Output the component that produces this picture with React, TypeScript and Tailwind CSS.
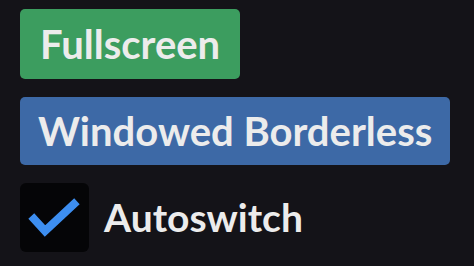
export default function App() {
  return (
    <div
      className="flex h-[266px] w-[474px] flex-col items-start gap-[18px] bg-[#141318] pl-[20px] pt-[9px] text-[#ececec]"
      style={{ fontFamily: 'Lato, sans-serif' }}
    >
      <button className="flex h-[70px] items-center whitespace-nowrap rounded-[5px] bg-[#3c9d5f] px-[20px] text-[40px] font-bold leading-none">
        Fullscreen
      </button>
      <button className="flex h-[68px] items-center whitespace-nowrap rounded-[5px] bg-[#3d69a6] px-[18px] text-[40px] font-bold leading-none">
        Windowed Borderless
      </button>
      <label className="flex items-center gap-[15px]">
        <span className="flex h-[69px] w-[69px] rounded-[6px] bg-[#050507]">
          <svg width="69" height="69" viewBox="0 0 69 69">
            <path d="M14 36 L25 48 L54 21" fill="none" stroke="#3d8ef0" strokeWidth="8" strokeLinecap="square" />
          </svg>
        </span>
        <span className="whitespace-nowrap text-[39px] font-bold leading-none">Autoswitch</span>
      </label>
    </div>
  )
}
